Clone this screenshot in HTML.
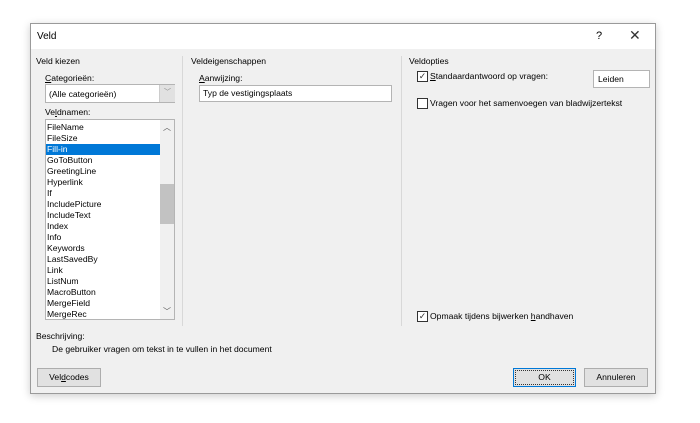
<!DOCTYPE html>
<html><head><style>
body{margin:0;width:700px;height:423px;background:#fff;font-family:"Liberation Sans",sans-serif;font-size:8.6px;color:#000;position:relative;overflow:hidden}
.a{position:absolute}
#dlg{left:30px;top:23px;width:624px;height:369px;background:#f0f0f0;border:1px solid #9a9a9a;box-shadow:0 2px 8px rgba(0,0,0,.2)}
#tb{left:0;top:0;width:624px;height:25px;background:#fff}
.sep{width:1px;background:#d8d8d8}
.box{background:#fff;border:1px solid #b4b4b4;box-sizing:border-box}
.cb{width:11px;height:11px;border:1px solid #333;background:#fff;box-sizing:border-box}
.btn{background:#e1e1e1;border:1px solid #adadad;box-sizing:border-box;text-align:center;line-height:17px}
.li{position:absolute;left:0px;height:11px;line-height:11px;width:113px;padding-left:1px}
u{text-decoration:underline}
</style></head><body>
<div id="dlg" class="a">
<div id="tb" class="a"></div>
<div class="a" style="left:6px;top:7px;font-size:10px">Veld</div>
<div class="a" style="left:565px;top:6px;font-size:11px">?</div>
<div class="a" style="left:598px;top:3px;font-size:14px;color:#333">✕</div>
<div class="a" style="left:5px;top:32px">Veld kiezen</div>
<div class="a" style="left:160px;top:32px">Veldeigenschappen</div>
<div class="a" style="left:378px;top:32px">Veldopties</div>
<div class="a sep" style="left:151px;top:32px;height:270px"></div>
<div class="a sep" style="left:370px;top:32px;height:270px"></div>
<div class="a" style="left:14px;top:49px"><u>C</u>ategorieën:</div>
<div class="a box" style="left:14px;top:60px;width:130px;height:19px;padding:3px 3px;line-height:12px">(Alle categorieën)</div>
<div class="a" style="left:128px;top:61px;width:15px;height:17px;background:#e1e1e1;border-left:1px solid #ccc;text-align:center;line-height:16px;color:#888;font-size:7px">﹀</div>
<div class="a" style="left:14px;top:83px">Ve<u>l</u>dnamen:</div>
<div class="a box" style="left:14px;top:95px;width:130px;height:201px;overflow:hidden">
<div class="li" style="top:2px">FileName</div>
<div class="li" style="top:13px">FileSize</div>
<div class="li" style="top:24px;background:#0078d7;color:#fff">Fill-in</div>
<div class="li" style="top:35px">GoToButton</div>
<div class="li" style="top:46px">GreetingLine</div>
<div class="li" style="top:57px">Hyperlink</div>
<div class="li" style="top:68px">If</div>
<div class="li" style="top:79px">IncludePicture</div>
<div class="li" style="top:90px">IncludeText</div>
<div class="li" style="top:101px">Index</div>
<div class="li" style="top:112px">Info</div>
<div class="li" style="top:123px">Keywords</div>
<div class="li" style="top:134px">LastSavedBy</div>
<div class="li" style="top:145px">Link</div>
<div class="li" style="top:156px">ListNum</div>
<div class="li" style="top:167px">MacroButton</div>
<div class="li" style="top:178px">MergeField</div>
<div class="li" style="top:189px">MergeRec</div>
<div class="a" style="left:114px;top:0;width:14px;height:199px;background:#f0f0f0"></div>
<div class="a" style="left:114px;top:64px;width:14px;height:40px;background:#c2c2c2"></div>
<div class="a" style="left:117px;top:2px;font-size:8px;color:#555">︿</div>
<div class="a" style="left:117px;top:186px;font-size:8px;color:#555">﹀</div>
</div>
<div class="a" style="left:168px;top:49px"><u>A</u>anwijzing:</div>
<div class="a box" style="left:168px;top:61px;width:193px;height:17px;padding:2px 3px;line-height:11px">Typ de vestigingsplaats</div>
<div class="a cb" style="left:386px;top:47px;font-size:9px;line-height:9px;text-align:center;color:#333">✓</div>
<div class="a" style="left:399px;top:47px"><u>S</u>tandaardantwoord op vragen:</div>
<div class="a box" style="left:562px;top:46px;width:57px;height:18px;padding:3px 4px;line-height:11px">Leiden</div>
<div class="a cb" style="left:386px;top:74px"></div>
<div class="a" style="left:399px;top:74px">Vragen voor het samenvoegen van bladwijzertekst</div>
<div class="a cb" style="left:386px;top:287px;font-size:9px;line-height:9px;text-align:center;color:#333">✓</div>
<div class="a" style="left:399px;top:287px">Opmaak tijdens bijwerken <u>h</u>andhaven</div>
<div class="a" style="left:5px;top:307px">Beschrijving:</div>
<div class="a" style="left:21px;top:320px">De gebruiker vragen om tekst in te vullen in het document</div>
<div class="a btn" style="left:6px;top:344px;width:64px;height:19px">Vel<u>d</u>codes</div>
<div class="a btn" style="left:482px;top:344px;width:63px;height:19px;border:1px solid #0078d7;outline:1px dotted #333;outline-offset:-3px">OK</div>
<div class="a btn" style="left:553px;top:344px;width:64px;height:19px">Annuleren</div>
</div>
</body></html>
